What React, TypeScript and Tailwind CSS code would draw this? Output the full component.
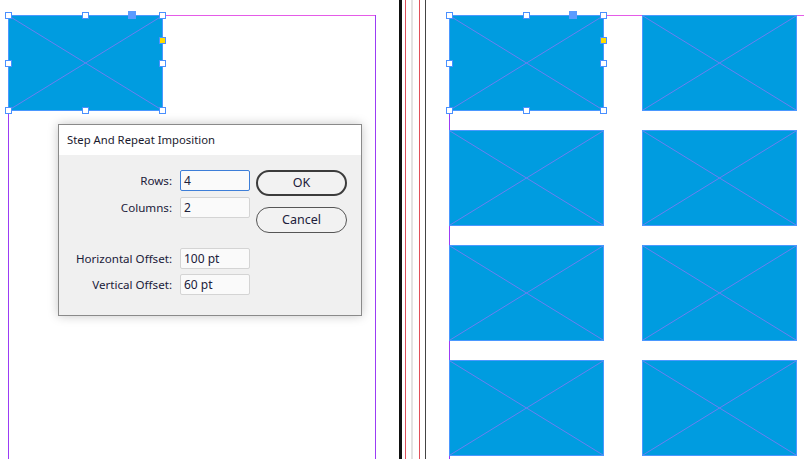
import React from "react";

const UI_FONT = "font-['Noto_Sans','Open_Sans',sans-serif]";

function Handle({ className }: { className: string }) {
  return (
    <span
      className={`absolute w-[7px] h-[7px] bg-white border border-[#4a90ff] ${className}`}
    />
  );
}

function Frame({ selected = false }: { selected?: boolean }) {
  return (
    <div className="relative w-[155px] h-[96px] bg-[#009ce0] border border-[#4a98ff] box-border">
      <svg className="absolute inset-0 w-full h-full" viewBox="0 0 153 94" preserveAspectRatio="none">
        <line x1="0" y1="0" x2="153" y2="94" stroke="#6a7ff0" strokeWidth="1" vectorEffect="non-scaling-stroke" />
        <line x1="153" y1="0" x2="0" y2="94" stroke="#6a7ff0" strokeWidth="1" vectorEffect="non-scaling-stroke" />
      </svg>
      {selected && (
        <>
          <Handle className="-left-[4px] -top-[4px]" />
          <Handle className="left-[73px] -top-[4px]" />
          <Handle className="left-[150px] -top-[4px]" />
          <Handle className="-left-[4px] top-[44px]" />
          <Handle className="left-[150px] top-[44px]" />
          <Handle className="-left-[4px] top-[91px]" />
          <Handle className="left-[73px] top-[91px]" />
          <Handle className="left-[150px] top-[91px]" />
          <span className="absolute left-[119px] -top-[5px] w-[8px] h-[8px] bg-[#5b9bff]" />
          <span className="absolute left-[150px] top-[21px] w-[7px] h-[7px] bg-[#ffdd00] border border-[#4a90ff]" />
        </>
      )}
    </div>
  );
}

function Field({ label, value, focused = false }: { label: string; value: string; focused?: boolean }) {
  return (
    <div className="flex items-center h-[21px]">
      <span className="w-[113px] text-right text-[11.6px] text-[#20203a]">{label}</span>
      <div
        className={`ml-[8px] w-[70px] h-[21px] rounded-[2px] bg-[#fafafa] pl-[3px] flex items-center text-[12px] text-[#20203a] border ${
          focused ? "border-[#3d7ed8]" : "border-[#d4d4d4]"
        }`}
      >
        {value}
      </div>
    </div>
  );
}

function StepRepeatDialog() {
  return (
    <div
      className={`absolute left-[58px] top-[124px] w-[304px] h-[192px] border border-[#8a8a8a] bg-[#f0f0f0] shadow-[0_0_10px_rgba(0,0,0,0.22)] flex flex-col ${UI_FONT}`}
    >
      <div className="h-[30px] bg-white pl-[8px] flex items-center text-[11.3px] text-[#1a1a2e]">
        Step And Repeat Imposition
      </div>
      <div className="flex pt-[15px]">
        <div className="flex flex-col">
          <div className="flex flex-col gap-[6px]">
            <Field label="Rows:" value="4" focused />
            <Field label="Columns:" value="2" />
          </div>
          <div className="flex flex-col gap-[5px] mt-[30px]">
            <Field label="Horizontal Offset:" value="100 pt" />
            <Field label="Vertical Offset:" value="60 pt" />
          </div>
        </div>
        <div className="ml-[6px] flex flex-col gap-[10px]">
          <button className="w-[91px] h-[26px] rounded-full border-2 border-[#3c3c3c] bg-[#f2f2f2] text-[12.5px] text-[#20203a]">
            OK
          </button>
          <button className="w-[91px] h-[26px] mt-px rounded-full border border-[#555] bg-[#f2f2f2] text-[12.5px] text-[#20203a]">
            Cancel
          </button>
        </div>
      </div>
    </div>
  );
}

export default function App() {
  return (
    <div className="w-[804px] h-[459px] bg-white flex overflow-hidden">
      {/* left spread */}
      <div className="relative w-[399px] h-full">
        <div className="absolute left-[8px] top-[15px] w-[368px] h-[460px] border-l border-r border-[#9b3cf5]">
          <div className="h-px bg-[#e55be8]" />
        </div>
        <div className="absolute left-[8px] top-[15px]">
          <Frame selected />
        </div>
        <StepRepeatDialog />
      </div>

      {/* spread divider */}
      <div className="flex h-full shrink-0">
        <div className="w-[3px] bg-[#111]" />
        <div className="w-[3px]" />
        <div className="w-px bg-[#e0505a]" />
        <div className="w-[5px]" />
        <div className="w-[2px] bg-[#e2e2e2]" />
        <div className="w-[6px]" />
        <div className="w-px bg-[#e0505a]" />
        <div className="w-[5px]" />
        <div className="w-px bg-[#444]" />
      </div>

      {/* right spread */}
      <div className="relative flex-1 h-full">
        <div className="absolute left-[23px] top-[15px] right-0 h-[460px] border-l border-[#9b3cf5]">
          <div className="h-px bg-[#e55be8]" />
        </div>
        <div className="absolute left-[23px] top-[15px] grid grid-cols-[155px_155px] gap-x-[38px] gap-y-[19px]">
          <Frame selected />
          <Frame />
          <Frame />
          <Frame />
          <Frame />
          <Frame />
          <Frame />
          <Frame />
        </div>
      </div>
    </div>
  );
}
